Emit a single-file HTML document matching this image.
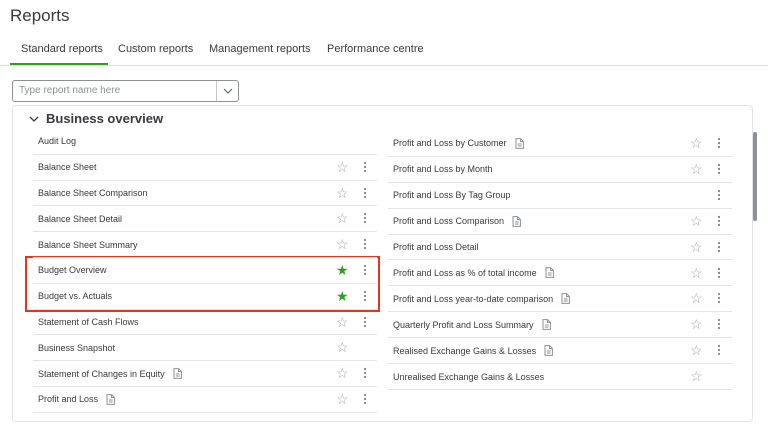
<!DOCTYPE html>
<html><head><meta charset="utf-8"><style>
*{box-sizing:border-box;margin:0;padding:0}
body{width:768px;height:424px;background:#fff;font-family:"Liberation Sans",sans-serif;color:#393a3d;position:relative;overflow:hidden}
.a{position:absolute}
h1{position:absolute;left:10px;top:6px;font-size:17px;font-weight:normal;color:#393a3d}
.tab{position:absolute;top:43px;font-size:11px;color:#393a3d}
.row{position:absolute;height:26px;border-bottom:1px solid #e3e4e6;font-size:9px;color:#393a3d;display:flex;align-items:center}
.row .t{padding-left:5px;display:flex;align-items:center}
.doc{margin-left:8px}
.star{position:absolute;top:5px;font-size:14px;line-height:14px;color:#a6a7ab}
.star.g{color:#2ca01c}
.dots{position:absolute;top:7px;width:2px;height:11px}
.dots i{display:block;width:2px;height:2px;background:#6b6c72;border-radius:1px;margin-bottom:2px}
</style></head><body>
<h1>Reports</h1>
<div class="tab" style="left:21px">Standard reports</div>
<div class="tab" style="left:118px">Custom reports</div>
<div class="tab" style="left:209px">Management reports</div>
<div class="tab" style="left:327px">Performance centre</div>
<div class="a" style="left:0;top:65px;width:768px;height:1px;background:#dcdde0"></div>
<div class="a" style="left:10px;top:63px;width:98px;height:2px;background:#2ca01c"></div>
<div class="a" style="left:12px;top:80px;width:227px;height:22px;border:1px solid #8d9096;border-radius:3px"></div>
<div class="a" style="left:216px;top:81px;width:1px;height:20px;background:#c6c7ca"></div>
<div class="a" style="left:19px;top:85px;font-size:10px;color:#8d9096">Type report name here</div>
<svg class="a" style="left:222px;top:86px" width="12" height="10"><path d="M2 3 L6 7 L10 3" fill="none" stroke="#6b6c72" stroke-width="1.2"/></svg>
<div class="a" style="left:12px;top:105px;width:741px;height:317px;border:1px solid #e3e4e6;border-radius:4px"></div>
<div class="a" style="left:753px;top:132px;width:4px;height:89px;background:#8d9096;border-radius:2px"></div>
<svg class="a" style="left:28px;top:114px" width="12" height="10"><path d="M2 3 L6 7 L10 3" fill="none" stroke="#393a3d" stroke-width="1.3"/></svg>
<div class="a" style="left:46px;top:111px;font-size:13px;font-weight:bold;color:#393a3d">Business overview</div>
<div class="a" style="left:25px;top:256px;width:355px;height:56px;border:2px solid #e8331f"></div>
<div id="L"></div><div id="R"></div>
<script>
var DOC='<svg class="doc" width="9" height="11" viewBox="0 0 9 11"><path d="M1 0.6 H5.6 L8.4 3.4 V10.4 H1 Z" fill="none" stroke="#8d9096" stroke-width="1"/><path d="M5.5 0.6 V3.5 H8.4" fill="none" stroke="#8d9096" stroke-width="0.9"/><path d="M2.8 6 H6.6 M2.8 8 H6.6" stroke="#8d9096" stroke-width="0.9"/></svg>';
function rows(id,x,w,top,pitch,items,sx,dx){var h='';items.forEach(function(it,i){var y=top+pitch*i;h+='<div class="row" style="left:'+x+'px;width:'+w+'px;top:'+y.toFixed(1)+'px;height:'+pitch+'px"><span class="t">'+it[0]+(it[1]?DOC:'')+'</span>';if(it[2])h+='<span class="star'+(it[2]==2?' g':'')+'" style="left:'+sx+'px">'+(it[2]==2?'★':'☆')+'</span>';if(it[3])h+='<span class="dots" style="left:'+dx+'px"><i></i><i></i><i></i></span>';h+='</div>'});document.getElementById(id).innerHTML=h}
rows('L',33,344,129,25.8,[["Audit Log",0,0,0],["Balance Sheet",0,1,1],["Balance Sheet Comparison",0,1,1],["Balance Sheet Detail",0,1,1],["Balance Sheet Summary",0,1,1],["Budget Overview",0,2,1],["Budget vs. Actuals",0,2,1],["Statement of Cash Flows",0,1,1],["Business Snapshot",0,1,0],["Statement of Changes in Equity",1,1,1],["Profit and Loss",1,1,1]],303,331);
rows('R',388,344,131,25.9,[["Profit and Loss by Customer",1,1,1],["Profit and Loss by Month",0,1,1],["Profit and Loss By Tag Group",0,0,1],["Profit and Loss Comparison",1,1,1],["Profit and Loss Detail",0,1,1],["Profit and Loss as % of total income",1,1,1],["Profit and Loss year-to-date comparison",1,1,1],["Quarterly Profit and Loss Summary",1,1,1],["Realised Exchange Gains &amp; Losses",1,1,1],["Unrealised Exchange Gains &amp; Losses",0,1,0]],302,330);
</script>
</body></html>
